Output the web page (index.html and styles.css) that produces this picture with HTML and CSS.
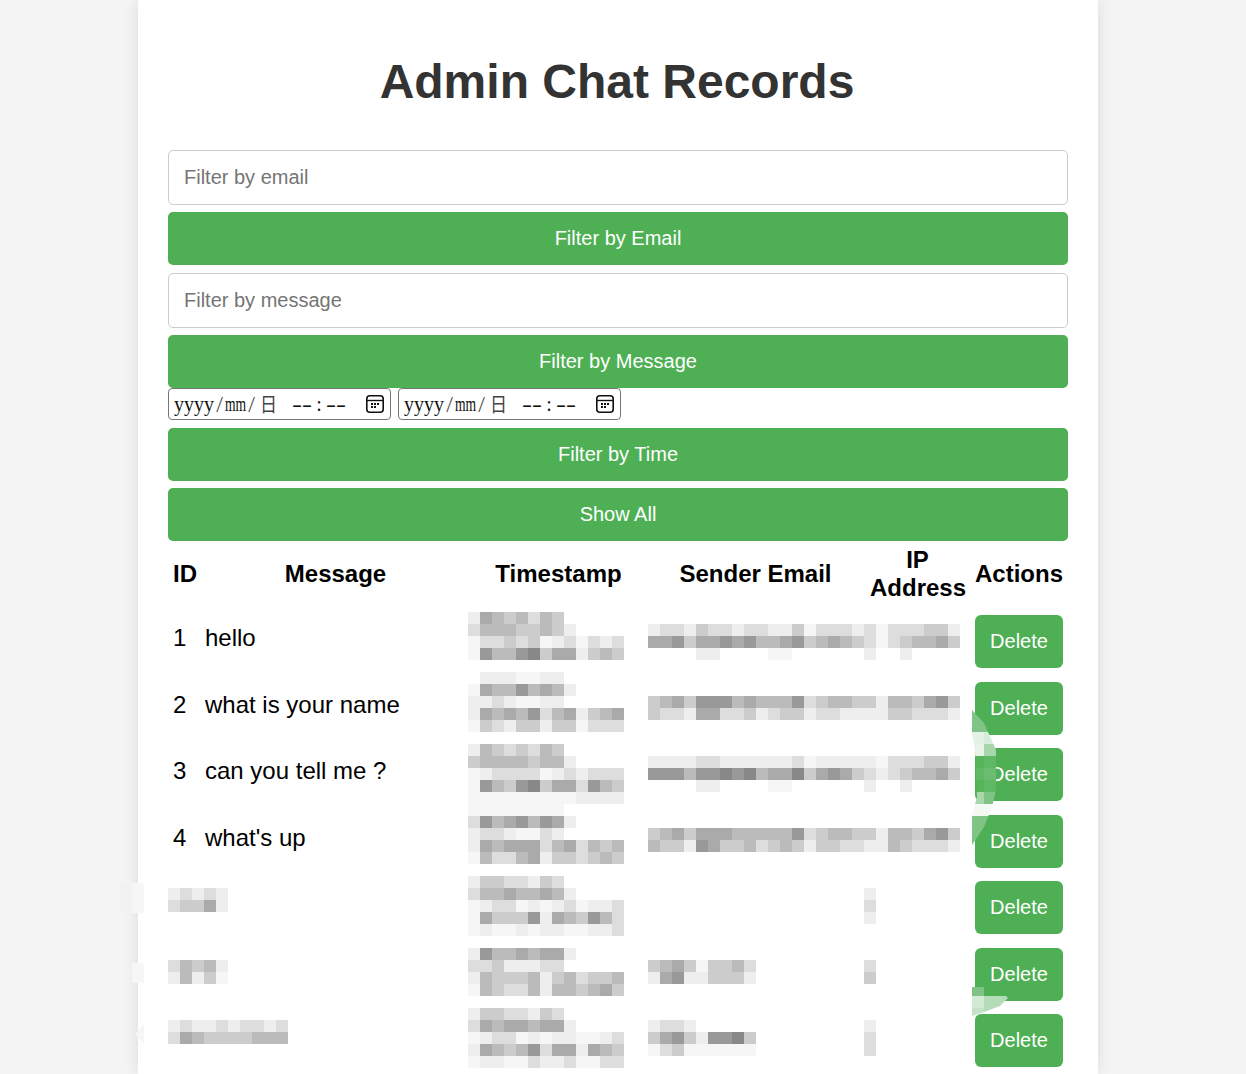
FILE: index.html
```html
<!DOCTYPE html>
<html lang="en">
<head>
    <meta charset="UTF-8">
    <meta name="viewport" content="width=device-width, initial-scale=1.0">
    <title>Admin Chat Records</title>
    <link rel="stylesheet" href="styles.css">
</head>
<body>
    <div class="container">
        <h1>Admin Chat Records</h1>

        <!-- Filters -->
        <input class="filter-input" type="text" placeholder="Filter by email">
        <button class="btn btn-email">Filter by Email</button>
        <input class="filter-input filter-input-message" type="text" placeholder="Filter by message">
        <button class="btn">Filter by Message</button>

        <div class="date-row">
            <div class="date-input">
                <span class="date-part">yyyy</span><span class="date-sep">/</span><span class="date-mm">mm</span><span class="date-sep">/</span><span class="date-day">日</span><span class="date-dash">--</span><span class="date-colon">:</span><span class="date-dash date-dash-end">--</span>
                <svg class="date-icon" width="18" height="18" viewBox="0 0 18 18"><rect x="0.8" y="0.8" width="16.4" height="16.4" rx="3" fill="none" stroke="#111" stroke-width="1.6"/><path d="M1 5.5h16" stroke="#111" stroke-width="1.4"/><path d="M5 8h2v2H5zM8 8h2v2H8zM11 8h2v2h-2zM5 11h2v2H5zM8 11h2v2H8z" fill="#111"/></svg>
            </div>
            <div class="date-input">
                <span class="date-part">yyyy</span><span class="date-sep">/</span><span class="date-mm">mm</span><span class="date-sep">/</span><span class="date-day">日</span><span class="date-dash">--</span><span class="date-colon">:</span><span class="date-dash date-dash-end">--</span>
                <svg class="date-icon" width="18" height="18" viewBox="0 0 18 18"><rect x="0.8" y="0.8" width="16.4" height="16.4" rx="3" fill="none" stroke="#111" stroke-width="1.6"/><path d="M1 5.5h16" stroke="#111" stroke-width="1.4"/><path d="M5 8h2v2H5zM8 8h2v2H8zM11 8h2v2h-2zM5 11h2v2H5zM8 11h2v2H8z" fill="#111"/></svg>
            </div>
        </div>

        <button class="btn btn-time">Filter by Time</button>
        <button class="btn btn-all">Show All</button>

        <!-- Records -->
        <table class="records">
            <colgroup>
                <col class="col-id">
                <col class="col-message">
                <col class="col-time">
                <col class="col-email">
                <col class="col-ip">
                <col class="col-actions">
            </colgroup>
            <thead>
                <tr>
                    <th>ID</th>
                    <th>Message</th>
                    <th>Timestamp</th>
                    <th>Sender Email</th>
                    <th>IP Address</th>
                    <th>Actions</th>
                </tr>
            </thead>
            <tbody>
                <tr><td>1</td><td>hello</td><td></td><td></td><td></td><td class="cell-action"><button class="btn-delete">Delete</button></td></tr>
                <tr><td>2</td><td>what is your name</td><td></td><td></td><td></td><td class="cell-action"><button class="btn-delete">Delete</button></td></tr>
                <tr><td>3</td><td>can you tell me ?</td><td></td><td></td><td></td><td class="cell-action"><button class="btn-delete">Delete</button></td></tr>
                <tr><td>4</td><td>what's up</td><td></td><td></td><td></td><td class="cell-action"><button class="btn-delete">Delete</button></td></tr>
                <tr><td></td><td></td><td></td><td></td><td></td><td class="cell-action"><button class="btn-delete">Delete</button></td></tr>
                <tr><td></td><td></td><td></td><td></td><td></td><td class="cell-action"><button class="btn-delete">Delete</button></td></tr>
                <tr><td></td><td></td><td></td><td></td><td></td><td class="cell-action"><button class="btn-delete">Delete</button></td></tr>
            </tbody>
        </table>
    </div>

    <!-- Redaction marks lying over the page -->
    <div id="mosaics"></div>

    <svg class="patch patch-a" width="24" height="140" viewBox="0 0 24 140">
        <defs><clipPath id="patch-a-shape"><polygon points="0,2 12,15 24,42 24,82 20,99 12,119 0,137 0,107 5,89 3,42 0,25"/></clipPath></defs>
        <g clip-path="url(#patch-a-shape)">
            <rect width="24" height="24" fill="#7fc485"/>
            <rect y="24" width="12" height="12" fill="#e4f2e5"/><rect x="12" y="24" width="12" height="12" fill="#d8edd9"/>
            <rect y="36" width="12" height="12" fill="#e8f4e9"/><rect x="12" y="36" width="12" height="12" fill="#a9d7ac"/>
            <rect y="48" width="12" height="12" fill="#57b45b"/><rect x="12" y="48" width="12" height="12" fill="#5fb864"/>
            <rect y="60" width="12" height="12" fill="#5fb864"/><rect x="12" y="60" width="12" height="12" fill="#6abd6e"/>
            <rect y="72" width="12" height="12" fill="#57b45b"/><rect x="12" y="72" width="12" height="12" fill="#5fb864"/>
            <rect y="84" width="12" height="12" fill="#a9d7ac"/><rect x="12" y="84" width="12" height="12" fill="#7fc485"/>
            <rect y="96" width="24" height="12" fill="#f3f9f3"/>
            <rect y="108" width="24" height="32" fill="#7fc485"/>
        </g>
    </svg>

    <svg class="patch patch-b" width="36" height="30" viewBox="0 0 36 30">
        <defs><clipPath id="patch-b-shape"><polygon points="0,0 12,0 12,9 34,9 36,11 28,19 12,25 0,29"/></clipPath></defs>
        <g clip-path="url(#patch-b-shape)">
            <rect width="12" height="9" fill="#7fc485"/>
            <rect y="9" width="12" height="12" fill="#d3ead5"/>
            <rect y="21" width="12" height="9" fill="#c4e3c6"/>
            <rect x="12" y="9" width="24" height="21" fill="#b5dcb8"/>
        </g>
    </svg>

    <div class="smudge smudge-a"></div>
    <div class="smudge smudge-b"></div>
    <div class="smudge smudge-c"></div>

    <script src="mosaics.js"></script>
</body>
</html>
```

FILE: styles.css
```css
* {
    box-sizing: border-box;
}

body {
    margin: 0;
    height: 100vh;
    overflow: hidden;
    position: relative;
    font-family: "Liberation Sans", Arial, sans-serif;
    background: #f4f4f4;
}

.container {
    width: 960px;
    min-height: 100vh;
    margin-left: 138px;
    padding: 51px 30px 0;
    background: #fff;
    box-shadow: 0 0 15px rgba(0, 0, 0, 0.1);
}

h1 {
    margin: 0 0 37px;
    padding-right: 2px;
    font-size: 48px;
    line-height: 62px;
    font-weight: bold;
    text-align: center;
    color: #333;
}

/* Filters */
.filter-input {
    display: block;
    width: 100%;
    height: 55px;
    padding: 15px;
    border: 1px solid #ccc;
    border-radius: 5px;
    font-family: inherit;
    font-size: 20px;
    outline: none;
}

.filter-input::placeholder {
    color: #757575;
}

.btn {
    display: block;
    width: 100%;
    height: 53px;
    margin-top: 7px;
    border: none;
    border-radius: 5px;
    background: #4eaf54;
    color: #fff;
    font-family: inherit;
    font-size: 20px;
    cursor: pointer;
}

.filter-input-message {
    margin-top: 8px;
}

.btn-time {
    margin-top: 8px;
}

.date-row {
    display: flex;
    gap: 7px;
}

.date-input {
    display: flex;
    align-items: center;
    width: 223px;
    height: 32px;
    padding-left: 5px;
    border: 1px solid #767676;
    border-radius: 4px;
    font-family: "Liberation Serif", "Noto Sans CJK SC", serif;
    font-size: 20px;
    color: #111;
}

.date-part {
    width: 40px;
}

.date-sep {
    width: 11px;
    font-size: 24px;
    font-weight: normal;
    text-align: center;
    color: #555;
}

.date-mm {
    display: inline-block;
    width: 21px;
    white-space: nowrap;
    transform: scaleX(0.68);
    transform-origin: left;
}

.date-day {
    width: 17px;
    margin-left: 3px;
    font-family: "Noto Sans CJK SC", serif;
    font-size: 20px;
    line-height: 1;
    color: #444;
    transform: scaleX(0.85);
    transform-origin: left;
}

.date-dash {
    display: inline-block;
    width: 20px;
    margin-left: 15px;
    white-space: nowrap;
    transform: scaleX(1.5);
    transform-origin: left;
}

.date-dash-end {
    margin-left: 0;
}

.date-colon {
    width: 14px;
    text-align: center;
}

.date-icon {
    margin-left: auto;
    margin-right: 6px;
}

/* Records table */
.records {
    width: 100%;
    table-layout: fixed;
    border-collapse: collapse;
    font-size: 24px;
    color: #000;
}

.col-id { width: 32px; }
.col-message { width: 271px; }
.col-time { width: 175px; }
.col-email { width: 219px; }
.col-ip { width: 105px; }
.col-actions { width: 98px; }

.records th {
    padding: 4.75px 5px 6.75px;
    font-weight: bold;
}

.records td {
    padding: 6.75px 5px 14px;
}

.records td.cell-action {
    padding: 6.75px 5px;
}

.btn-delete {
    display: block;
    width: 88px;
    height: 53px;
    border: none;
    border-radius: 6px;
    background: #4eaf54;
    color: #fff;
    font-family: inherit;
    font-size: 20px;
    cursor: pointer;
}

/* Redaction marks */
.mosaic {
    position: absolute;
    display: grid;
    grid-auto-rows: 12px;
    grid-auto-columns: 12px;
}

.patch {
    position: absolute;
}

.patch-a {
    left: 972px;
    top: 708px;
}

.patch-b {
    left: 972px;
    top: 987px;
}

.smudge {
    position: absolute;
    background: #f6f6f6;
}

.smudge-a {
    left: 120px;
    top: 883px;
    width: 24px;
    height: 30px;
    background: linear-gradient(to right, #f2f2f2 50%, #f6f6f6 50%);
}

.smudge-b {
    left: 132px;
    top: 963px;
    width: 12px;
    height: 20px;
}

.smudge-c {
    left: 135px;
    top: 1024px;
    width: 9px;
    height: 20px;
    clip-path: polygon(100% 0, 100% 100%, 0 50%);
}
```

FILE: mosaics.js
```js
// Each char is one 12px cell: hex digit = grey level, dot = nothing
const mosaics = [
    // id column
    { x: 168, y: 888, rows: ['edede', 'dccae'] },
    { x: 168, y: 960, rows: ['dbcbe', 'ebecf'] },
    { x: 168, y: 1020, rows: ['edeededded', 'dabccccbbb'] },
    // timestamps
    { x: 468, y: 612, rows: ['eabcbdbc', 'dbbbccbce', 'fddcdcfedfded', 'f9bb98caaecbc'] },
    { x: 468, y: 672, rows: ['.eeeffee', 'fabb9babe', 'eedeffee', 'eabab9dbaecba', 'fcdeccecc' + 'fddd'] },
    { x: 468, y: 744, rows: ['ebcdcdbc', 'cbbbbcbbe', 'feddddfededdd', 'f9bc98caad9bc', 'fffffffffeeee', 'ffffffff'] },
    { x: 468, y: 816, rows: ['d9ba9b9ae', 'eddeffde', 'eabaaadbadbcb', 'fbddbaeccdcbc'] },
    { x: 468, y: 876, rows: ['eccddecd', 'dbbabbabe', 'feddfefedfeed', 'faccc9eabc9bd', 'feffefeeffeed'] },
    { x: 468, y: 948, rows: ['e9bbabaae', 'ddceeedd', 'ebcccbecbdccb', 'fbcddbebbcbac'] },
    { x: 468, y: 1008, rows: ['eccddecd', 'dabaabaae', 'feddfefeeffed', 'eabcb9daaeabc', 'feeffdeedffdd'] },
    // sender emails
    { x: 648, y: 624, rows: ['eddecddeddeecfdddedfdddcce', 'aa9caa9a9bba9cbabcdfdcbbac', '....ee....ff......e..e'] },
    { x: 648, y: 696, rows: ['cbac999babbb9dcbbccebbca9c', 'cddeaaddcedccedde' + 'eeeccddde'] },
    { x: 648, y: 756, rows: ['eeeeddeeeeeedfeeeeefdddcce', '999b99898baa8ca9acdedcbbac', '....ee....ff......e..e'] },
    { x: 648, y: 828, rows: ['cbacaaabbbbb9dcbbccebbca9c', 'bcce9accbdcbceccddeebcddde'] },
    { x: 648, y: 960, rows: ['cbacfccbd', 'ea9eeccce'] },
    { x: 648, y: 1020, rows: ['edde', 'ca9ce998c', 'fdcffffff'] },
    // ip addresses
    { x: 864, y: 888, rows: ['e', 'd', 'e'] },
    { x: 864, y: 960, rows: ['d', 'c'] },
    { x: 864, y: 1020, rows: ['e', 'd', 'd'] }
];

const layer = document.getElementById('mosaics');

mosaics.forEach(m => {
    const block = document.createElement('div');
    block.className = 'mosaic';
    block.style.left = m.x + 'px';
    block.style.top = m.y + 'px';
    m.rows.forEach((row, r) => {
        [...row].forEach((ch, c) => {
            if (ch === '.') return;
            const cell = document.createElement('div');
            cell.style.gridRow = r + 1;
            cell.style.gridColumn = c + 1;
            // f is the faintest cell, not pure white
            cell.style.background = ch === 'f' ? '#f6f6f6' : '#' + ch + ch + ch;
            block.appendChild(cell);
        });
    });
    layer.appendChild(block);
});
```
